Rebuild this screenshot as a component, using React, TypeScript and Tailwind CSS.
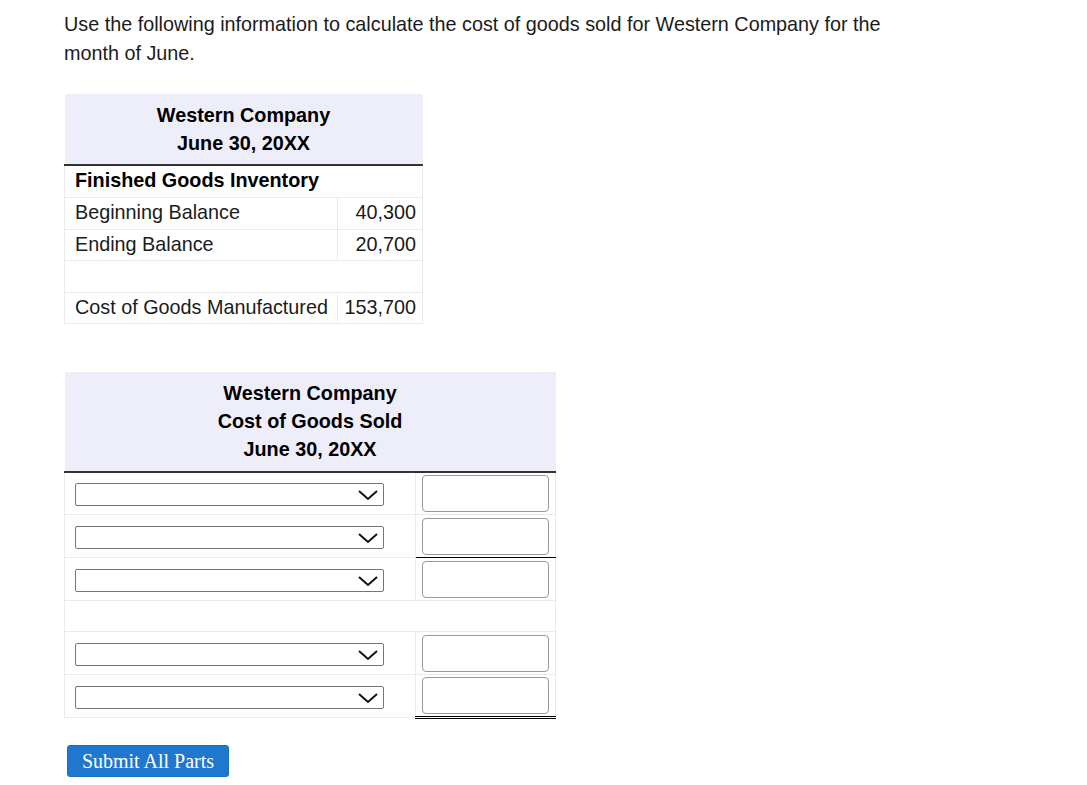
const font = { fontFamily: '"Liberation Sans", Arial, sans-serif' };

function Chevron() {
  return (
    <svg width="22" height="12" viewBox="0 0 22 12" className="absolute right-[4px] top-[5px]">
      <path d="M2 2 L11 10 L20 2" fill="none" stroke="#111" strokeWidth="2" />
    </svg>
  );
}

function SelectBox() {
  return (
    <div className="relative h-[23px] w-[309px] rounded-[2px] border border-[#767676] bg-white">
      <Chevron />
    </div>
  );
}

function AmountInput() {
  return <div className="h-[37px] w-[127px] rounded-[4px] border border-[#9a9a9a] bg-white" />;
}

type Row = { kind: "entry"; line?: "single" | "double" } | { kind: "blank" };

const cogsRows: Row[] = [
  { kind: "entry" },
  { kind: "entry", line: "single" },
  { kind: "entry" },
  { kind: "blank" },
  { kind: "entry", line: "single" },
  { kind: "entry", line: "double" },
];

export default function App() {
  return (
    <div className="min-h-screen bg-white px-16 pt-[10px] text-[19.8px] text-[#1b1b1b]" style={font}>
      {/* 안내 문구 */}
      <p className="w-[860px] leading-[29px]">
        Use the following information to calculate the cost of goods sold for Western Company for the month of June.
      </p>

      {/* 완제품 재고 정보 */}
      <table className="mt-[26px] w-[359px] border-collapse">
        <thead>
          <tr>
            <th colSpan={2} className="h-[71px] border-b-2 border-[#333] bg-[#eeeefa] text-center font-bold leading-[28px] text-black">
              Western Company
              <br />
              June 30, 20XX
            </th>
          </tr>
        </thead>
        <tbody>
          <tr>
            <td colSpan={2} className="h-[32px] border border-[#ebebeb] pl-[10px] font-bold text-black">
              Finished Goods Inventory
            </td>
          </tr>
          <tr>
            <td className="h-[32px] w-[273px] border border-[#ebebeb] pl-[10px]">Beginning Balance</td>
            <td className="border border-[#ebebeb] pr-[6px] text-right">40,300</td>
          </tr>
          <tr>
            <td className="h-[31px] border border-[#ebebeb] pl-[10px]">Ending Balance</td>
            <td className="border border-[#ebebeb] pr-[6px] text-right">20,700</td>
          </tr>
          <tr>
            <td colSpan={2} className="h-[32px] border border-[#ebebeb]" />
          </tr>
          <tr>
            <td className="h-[31px] whitespace-nowrap border border-[#ebebeb] pl-[10px]">Cost of Goods Manufactured</td>
            <td className="border border-[#ebebeb] pr-[6px] text-right">153,700</td>
          </tr>
        </tbody>
      </table>

      {/* 매출원가 입력 표 */}
      <table className="mt-[48px] w-[492px] border-collapse">
        <thead>
          <tr>
            <th colSpan={2} className="h-[100px] border-b-2 border-[#333] bg-[#eeeefa] text-center font-bold leading-[28px] text-black">
              Western Company
              <br />
              Cost of Goods Sold
              <br />
              June 30, 20XX
            </th>
          </tr>
        </thead>
        <tbody>
          {cogsRows.map((row, i) =>
            row.kind === "blank" ? (
              <tr key={i}>
                <td colSpan={2} className="h-[31px] border border-[#ebebeb]" />
              </tr>
            ) : (
              <tr key={i}>
                <td className="h-[43px] w-[351px] border border-[#ebebeb] pl-[10px] pt-[3px] align-middle">
                  <SelectBox />
                </td>
                <td
                  className={
                    row.line === "double"
                      ? "border border-b-[3px] border-[#ebebeb] border-b-black border-double px-[6px]"
                      : row.line === "single"
                        ? "border border-[#ebebeb] border-b-black px-[6px]"
                        : "border border-[#ebebeb] px-[6px]"
                  }
                >
                  <AmountInput />
                </td>
              </tr>
            )
          )}
        </tbody>
      </table>

      {/* 제출 버튼 */}
      <button
        type="button"
        className="ml-[3px] mt-[26px] h-[32px] w-[162px] rounded-[3px] border border-[#1a6fc4] bg-[#1f77d0] text-[20px] text-white"
        style={{ fontFamily: '"Liberation Serif", "Times New Roman", serif' }}
      >
        Submit All Parts
      </button>
    </div>
  );
}
